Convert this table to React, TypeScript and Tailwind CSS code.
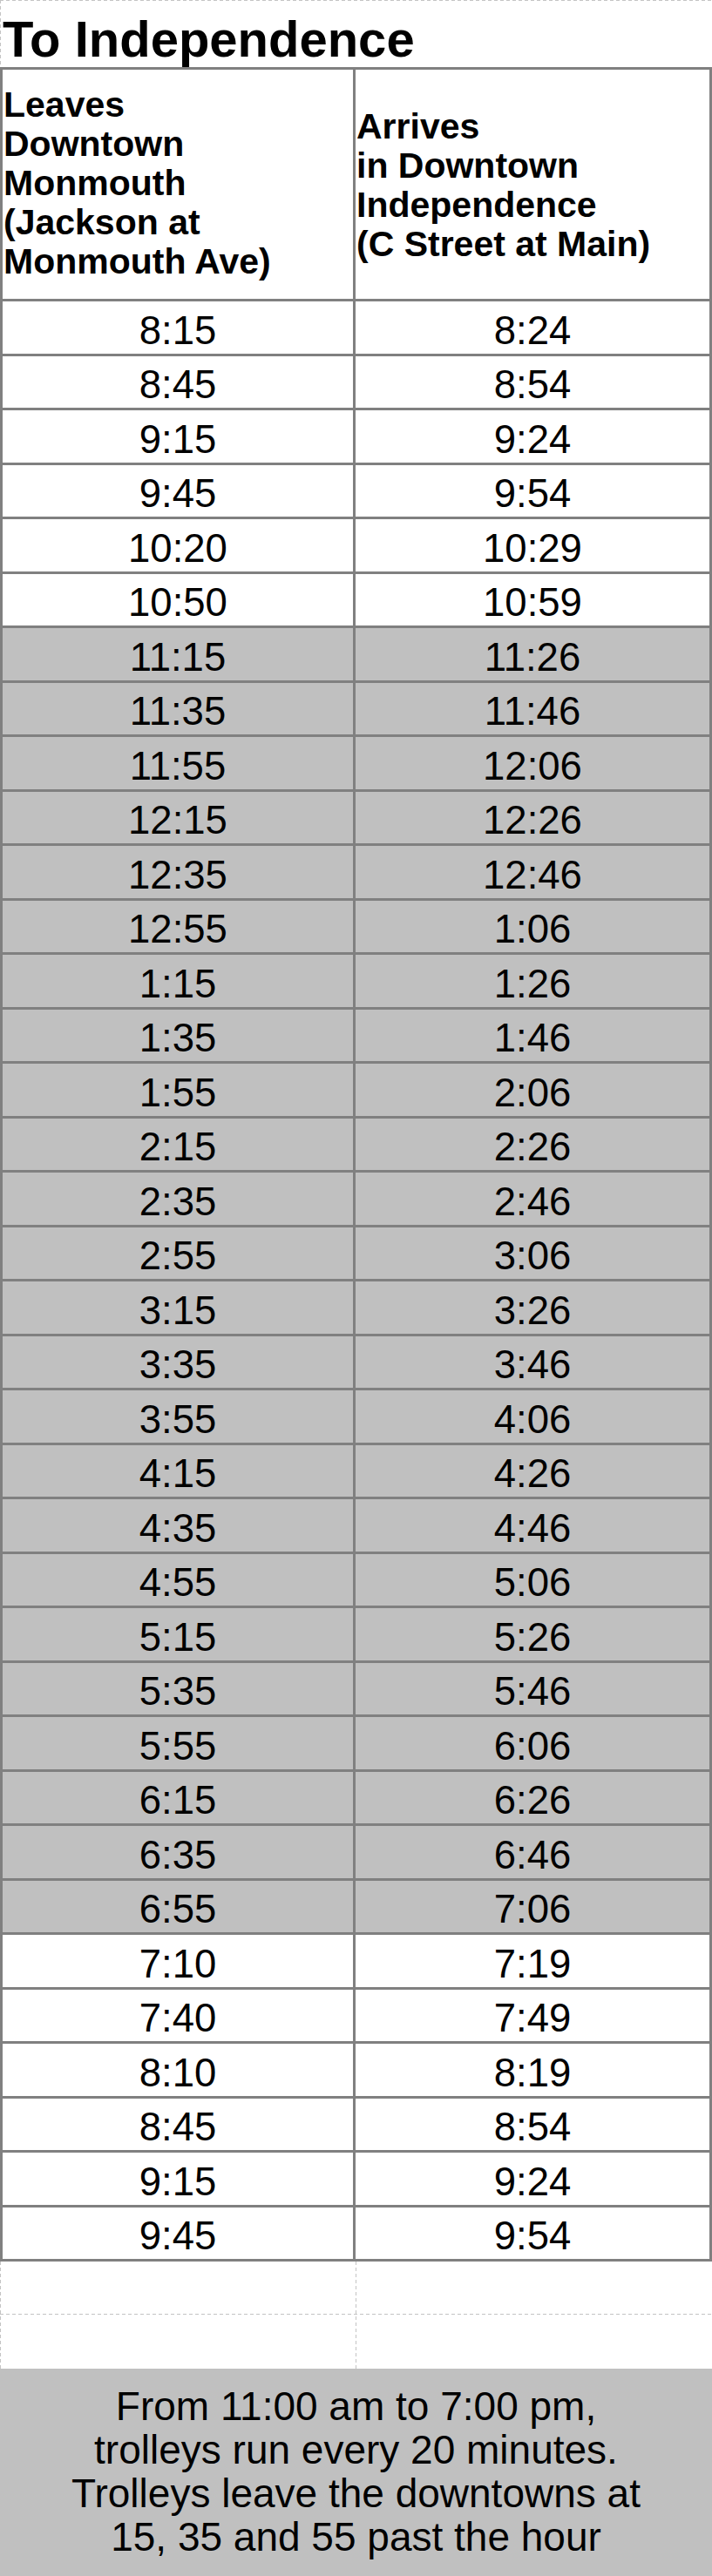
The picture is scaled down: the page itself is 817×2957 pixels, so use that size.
import React from "react";

const rows: [string, string, boolean][] = [
  ["8:15", "8:24", false],
  ["8:45", "8:54", false],
  ["9:15", "9:24", false],
  ["9:45", "9:54", false],
  ["10:20", "10:29", false],
  ["10:50", "10:59", false],
  ["11:15", "11:26", true],
  ["11:35", "11:46", true],
  ["11:55", "12:06", true],
  ["12:15", "12:26", true],
  ["12:35", "12:46", true],
  ["12:55", "1:06", true],
  ["1:15", "1:26", true],
  ["1:35", "1:46", true],
  ["1:55", "2:06", true],
  ["2:15", "2:26", true],
  ["2:35", "2:46", true],
  ["2:55", "3:06", true],
  ["3:15", "3:26", true],
  ["3:35", "3:46", true],
  ["3:55", "4:06", true],
  ["4:15", "4:26", true],
  ["4:35", "4:46", true],
  ["4:55", "5:06", true],
  ["5:15", "5:26", true],
  ["5:35", "5:46", true],
  ["5:55", "6:06", true],
  ["6:15", "6:26", true],
  ["6:35", "6:46", true],
  ["6:55", "7:06", true],
  ["7:10", "7:19", false],
  ["7:40", "7:49", false],
  ["8:10", "8:19", false],
  ["8:45", "8:54", false],
  ["9:15", "9:24", false],
  ["9:45", "9:54", false],
];

function DashH() {
  return <div className="h-px w-full bg-[repeating-linear-gradient(90deg,#c4c4c4_0_4px,transparent_4px_7px)]" />;
}

export default function App() {
  return (
    <div className="w-[817px] bg-white text-black font-['Liberation_Sans',Arial,sans-serif]">
      {/* title area */}
      <div className="relative h-[77px]">
        <div className="absolute left-0 top-0 w-full">
          <DashH />
        </div>
        <div className="absolute left-0 top-0 h-full w-px bg-[repeating-linear-gradient(180deg,#c4c4c4_0_4px,transparent_4px_7px)]" />
        <div className="pl-[3px] pt-[16px] text-[58px] leading-[58px] font-bold whitespace-nowrap">
          To Independence
        </div>
      </div>

      {/* table */}
      <div className="border-x-[3px] border-t-[3px] border-[#808080]">
        <div className="flex h-[266px] border-b-[3px] border-[#808080] text-[41px] leading-[45px] font-bold whitespace-nowrap">
          <div className="w-[405px] shrink-0 border-r-[3px] border-[#808080] pl-[1px] pt-[18px]">
            Leaves
            <br />
            Downtown
            <br />
            Monmouth
            <br />
            (Jackson at
            <br />
            Monmouth Ave)
          </div>
          <div className="flex-1 pl-[1px] pt-[43px]">
            Arrives
            <br />
            in Downtown
            <br />
            Independence
            <br />
            (C Street at Main)
          </div>
        </div>
        {rows.map(([a, b, shaded], i) => (
          <div
            key={i}
            className={`flex h-[62.5px] border-b-[3px] border-[#808080] text-[45.5px] leading-[normal] ${
              shaded ? "bg-[#c0c0c0]" : "bg-white"
            }`}
          >
            <div className="flex w-[405px] shrink-0 items-end justify-center border-r-[3px] border-[#808080]">
              {a}
            </div>
            <div className="flex flex-1 items-end justify-center">{b}</div>
          </div>
        ))}
      </div>

      {/* empty spreadsheet rows */}
      <div className="relative h-[123px]">
        <div className="absolute left-0 top-0 h-full w-px bg-[repeating-linear-gradient(180deg,#c4c4c4_0_4px,transparent_4px_7px)]" />
        <div className="absolute left-[408px] top-0 h-full w-px bg-[repeating-linear-gradient(180deg,#c4c4c4_0_4px,transparent_4px_7px)]" />
        <div className="h-[60px]" />
        <DashH />
      </div>

      {/* footer note */}
      <div className="h-[238px] bg-[#c0c0c0] pt-[18px] text-center text-[46px] leading-[50px]">
        From 11:00 am to 7:00 pm,
        <br />
        trolleys run every 20 minutes.
        <br />
        Trolleys leave the downtowns at
        <br />
        15, 35 and 55 past the hour
      </div>
    </div>
  );
}
